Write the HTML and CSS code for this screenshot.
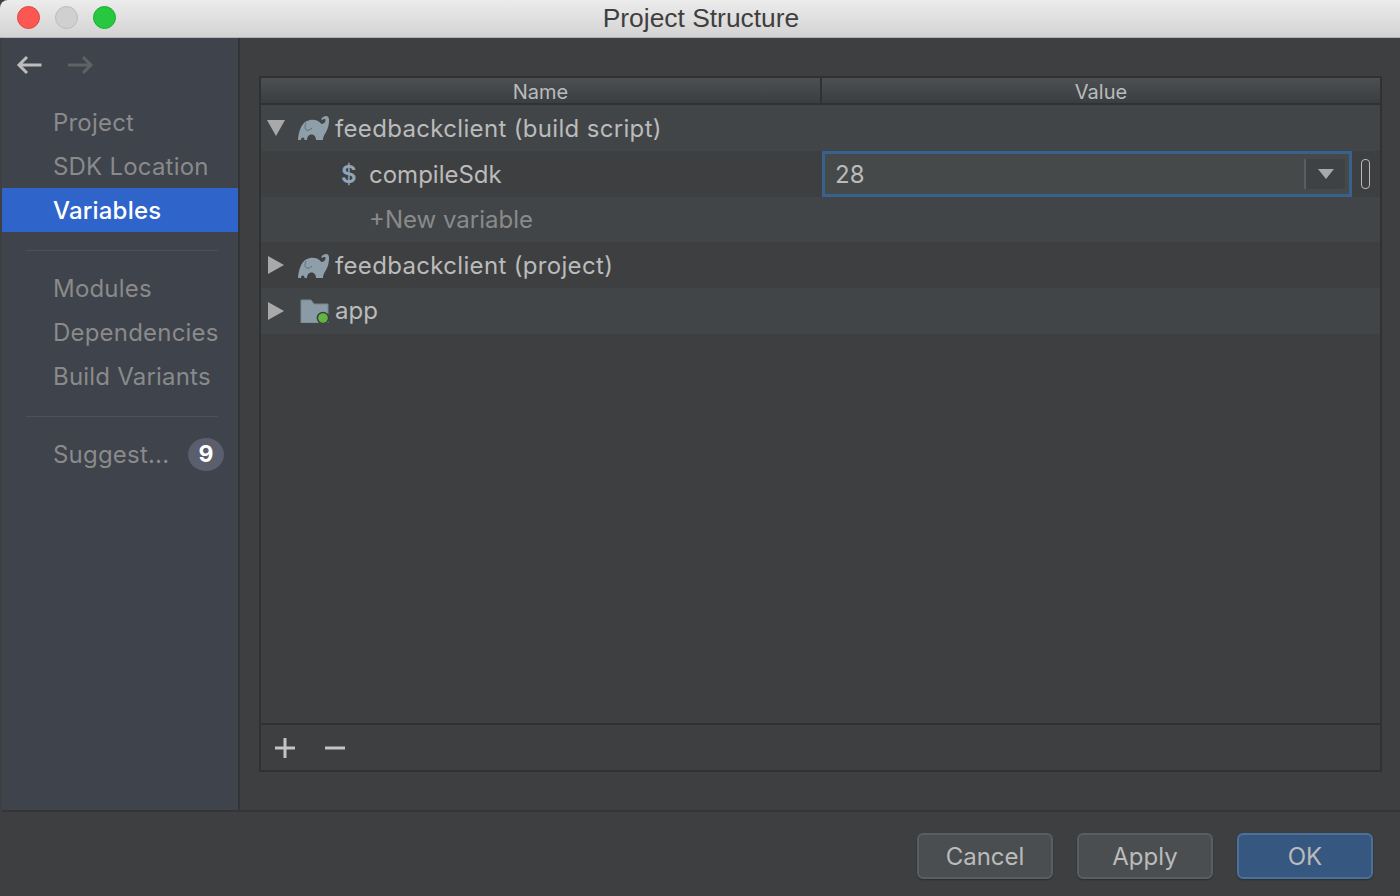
FILE: index.html
```html
<!DOCTYPE html>
<html lang="en">
<head>
    <meta charset="UTF-8">
    <title>Project Structure</title>
    <link rel="stylesheet" href="styles.css">
</head>
<body>
    <svg class="defs" width="0" height="0">
        <symbol id="elephant" viewBox="0 0 31 25">
            <path d="M0 25C0.5 17 3 9.5 8 6.5C13 3.5 20 4 23.5 9C25.5 9 27.2 7.5 27.5 5.5C27.7 3.8 26 3.2 24 5.2L23.3 3.8C25.5 0.5 30.8 -0.8 31 4.5C31.3 12 28 17 26 20.5C25.2 22 25 23.5 25 25H18C18 22 16.5 19.5 13.5 19.5C10.5 19.5 9 22 9 25H6.5C6.5 23.5 6 22.5 5 22.5C3.5 22.5 3 23.5 3 25Z" fill="#8f9fa9"/>
            <path d="M8.5 8C6.5 10 6.5 13.5 8.5 15C10.5 15.8 12.5 14.8 14 13" fill="none" stroke="#5d6a72" stroke-width="1"/>
        </symbol>
    </svg>

    <div class="window">
        <div class="titlebar">
            <div class="lights">
                <span class="light red"></span>
                <span class="light gray"></span>
                <span class="light green"></span>
            </div>
            <div class="window-title">Project Structure</div>
        </div>

        <div class="content">
            <div class="sidebar">
                <div class="nav-arrows">
                    <svg width="27" height="20" viewBox="0 0 27 20"><path d="M25.5 10H3M11 2L3 10L11 18" fill="none" stroke="#bdbdbd" stroke-width="3"/></svg>
                    <svg width="27" height="20" viewBox="0 0 27 20"><path d="M1 10H24M16 2L24 10L16 18" fill="none" stroke="#5f6163" stroke-width="3"/></svg>
                </div>
                <div class="side-item">Project</div>
                <div class="side-item">SDK Location</div>
                <div class="side-item selected">Variables</div>
                <div class="side-sep"></div>
                <div class="side-item">Modules</div>
                <div class="side-item">Dependencies</div>
                <div class="side-item">Build Variants</div>
                <div class="side-sep"></div>
                <div class="side-item">Suggest...<span class="badge">9</span></div>
            </div>

            <div class="main">
                <div class="table-box">
                    <div class="table-head">
                        <div class="col-name">Name</div>
                        <div class="col-value">Value</div>
                    </div>
                    <div class="table-body">
                        <div class="row stripe low-text">
                            <span class="arrow down"></span>
                            <svg class="row-icon"><use href="#elephant"/></svg>
                            <span class="wide-name">feedbackclient (build script)</span>
                        </div>
                        <div class="row low-text">
                            <div class="col-name var-cell">
                                <span class="dollar">$</span>
                                <span>compileSdk</span>
                            </div>
                            <div class="value-cell">
                                <div class="combo">
                                    <span class="combo-text">28</span>
                                    <span class="combo-btn"><span class="combo-caret"></span></span>
                                </div>
                                <span class="pill"></span>
                            </div>
                        </div>
                        <div class="row stripe new-var low-text">+New variable</div>
                        <div class="row">
                            <span class="arrow right"></span>
                            <svg class="row-icon"><use href="#elephant"/></svg>
                            <span class="wide-name">feedbackclient (project)</span>
                        </div>
                        <div class="row stripe">
                            <span class="arrow right"></span>
                            <svg class="row-icon" viewBox="0 0 31 25">
                                <path d="M3 2H13L16 6H30V25H3Z" fill="#8a9ba6" stroke="#75858f" stroke-width="1"/>
                                <circle cx="25" cy="20" r="5.6" fill="#62b543" stroke="#3a3d3f" stroke-width="1.5"/>
                            </svg>
                            <span>app</span>
                        </div>
                    </div>
                    <div class="table-foot">
                        <svg width="20" height="20" viewBox="0 0 20 20"><path d="M10 0V20M0 10H20" stroke="#c4c4c4" stroke-width="3"/></svg>
                        <svg width="20" height="20" viewBox="0 0 20 20"><path d="M0 10H20" stroke="#c4c4c4" stroke-width="3"/></svg>
                    </div>
                </div>
            </div>
        </div>

        <div class="footer">
            <button class="btn">Cancel</button>
            <button class="btn">Apply</button>
            <button class="btn primary">OK</button>
        </div>
    </div>
</body>
</html>
```

FILE: styles.css
```css
* {
    box-sizing: border-box;
}

body {
    margin: 0;
    background: #26282b;
    font-family: Inter, "Liberation Sans", sans-serif;
    overflow: hidden;
}

.defs {
    display: block;
}

.window {
    width: 1400px;
    height: 896px;
    padding-left: 2px;
    display: flex;
    flex-direction: column;
    background: #3e3f41;
}

.titlebar {
    height: 38px;
    flex: none;
    margin-left: -2px;
    position: relative;
    display: flex;
    align-items: center;
    justify-content: center;
    background: linear-gradient(#ececec, #d3d3d3);
    border-bottom: 1px solid #b4b4b4;
    border-top-left-radius: 8px;
}

.window-title {
    margin-left: 2px;
    font-family: "Liberation Sans", sans-serif;
    font-size: 26.4px;
    color: #3f3f3f;
}

.lights {
    position: absolute;
    left: 17px;
    top: 6px;
    display: flex;
    gap: 15px;
}

.light {
    width: 23px;
    height: 23px;
    border-radius: 50%;
}

.red {
    background: #fc5753;
    border: 1px solid #df4744;
}

.gray {
    background: #d0d0d0;
    border: 1px solid #bcbcbc;
}

.green {
    background: #27c83f;
    border: 1px solid #1fad31;
}

.content {
    flex: 1;
    display: flex;
    min-height: 0;
    border-bottom: 2px solid #323436;
}

.sidebar {
    width: 238px;
    flex: none;
    background: #3e434c;
    border-right: 2px solid #323436;
    color: #8a8a8a;
    font-size: 24px;
}

.nav-arrows {
    height: 62px;
    padding: 17px 0 0 14px;
    display: flex;
    gap: 24px;
}

.nav-arrows svg {
    display: block;
}

.side-item {
    height: 44px;
    padding-left: 51px;
    display: flex;
    align-items: center;
    letter-spacing: 0.2px;
    white-space: nowrap;
}

.selected {
    background: #2f65ca;
    color: #fff;
    font-weight: 500;
}

.side-sep {
    height: 1px;
    margin: 18px 20px 15px 24px;
    background: #4d5057;
}

.badge {
    width: 36px;
    height: 33px;
    margin-left: auto;
    margin-right: 14px;
    border-radius: 50%;
    background: #5a5e6d;
    color: #fff;
    font-size: 23px;
    font-weight: 700;
    display: flex;
    align-items: center;
    justify-content: center;
}

.main {
    flex: 1;
    padding: 38px 18px 38px 20px;
    margin-left: -1px;
    display: flex;
}

.table-box {
    flex: 1;
    display: flex;
    flex-direction: column;
    border: 2px solid #2f3133;
    color: #bbbbbb;
    font-size: 24px;
}

.table-head {
    height: 25px;
    flex: none;
    display: flex;
    background: linear-gradient(#4c5053, #3b3e40);
    font-size: 20px;
    box-sizing: content-box;
    border-bottom: 2px solid #2f3133;
}

.col-name {
    width: 561px;
    flex: none;
}

.table-head .col-name,
.col-value {
    display: flex;
    align-items: center;
    justify-content: center;
    padding-top: 2px;
}

.table-head .col-name {
    border-right: 2px solid #2f3133;
}

.col-value {
    flex: 1;
}

.table-body {
    flex: 1;
}

.row {
    height: 45.75px;
    display: flex;
    align-items: center;
    white-space: nowrap;
}

.stripe {
    background: #414548;
}

.low-text {
    line-height: 31px;
}

.wide-name {
    letter-spacing: 0.33px;
}

.arrow {
    width: 0;
    height: 0;
    flex: none;
    margin-left: 6px;
}

.arrow.down {
    border-left: 9px solid transparent;
    border-right: 9px solid transparent;
    border-top: 16px solid #a9a9a9;
}

.arrow.right {
    margin-left: 7px;
    margin-right: 1px;
    border-top: 9px solid transparent;
    border-bottom: 9px solid transparent;
    border-left: 16px solid #a9a9a9;
}

.row-icon {
    width: 31px;
    height: 25px;
    margin: 0 6px 0 13px;
    flex: none;
}

.wide-name,
.var-cell span,
.combo-text {
    padding-top: 1px;
}

.var-cell {
    display: flex;
    align-items: center;
    padding-left: 80px;
}

.dollar {
    width: 28px;
    color: #8fa5b8;
    font-weight: 600;
}

.new-var {
    padding-left: 108px;
    padding-top: 1px;
    color: #8a8a8a;
}

.value-cell {
    flex: 1;
    display: flex;
    align-items: center;
    align-self: stretch;
}

.combo {
    width: 530px;
    height: 46px;
    padding: 0 4px 0 10px;
    display: flex;
    align-items: center;
    justify-content: space-between;
    background: #45494a;
    border: 3px solid #37618f;
}

.combo-btn {
    width: 41px;
    height: 30px;
    display: flex;
    align-items: center;
    justify-content: center;
    background: #3f4244;
    border-left: 2px solid #5a5d5f;
    border-radius: 0 3px 3px 0;
}

.combo-caret {
    border-left: 8px solid transparent;
    border-right: 8px solid transparent;
    border-top: 10px solid #a9a9a9;
}

.pill {
    width: 9px;
    height: 30px;
    margin-left: 9px;
    border: 1.5px solid #bbbbbb;
    border-radius: 4px;
}

.table-foot {
    height: 47px;
    flex: none;
    padding-left: 14px;
    display: flex;
    align-items: center;
    gap: 30px;
    border-top: 2px solid #2f3133;
}

.footer {
    height: 84px;
    flex: none;
    padding: 21px 27px 0 0;
    display: flex;
    justify-content: flex-end;
    align-items: flex-start;
    gap: 24px;
}

.btn {
    width: 136px;
    height: 46px;
    font-family: Inter, "Liberation Sans", sans-serif;
    font-size: 24px;
    color: #bbbbbb;
    background: #4a4e50;
    border: 2px solid #5b5e60;
    border-radius: 6px;
    box-shadow: 0 1px 2px rgba(0, 0, 0, 0.3);
}

.primary {
    background: #365880;
    border-color: #4c7199;
}
```
